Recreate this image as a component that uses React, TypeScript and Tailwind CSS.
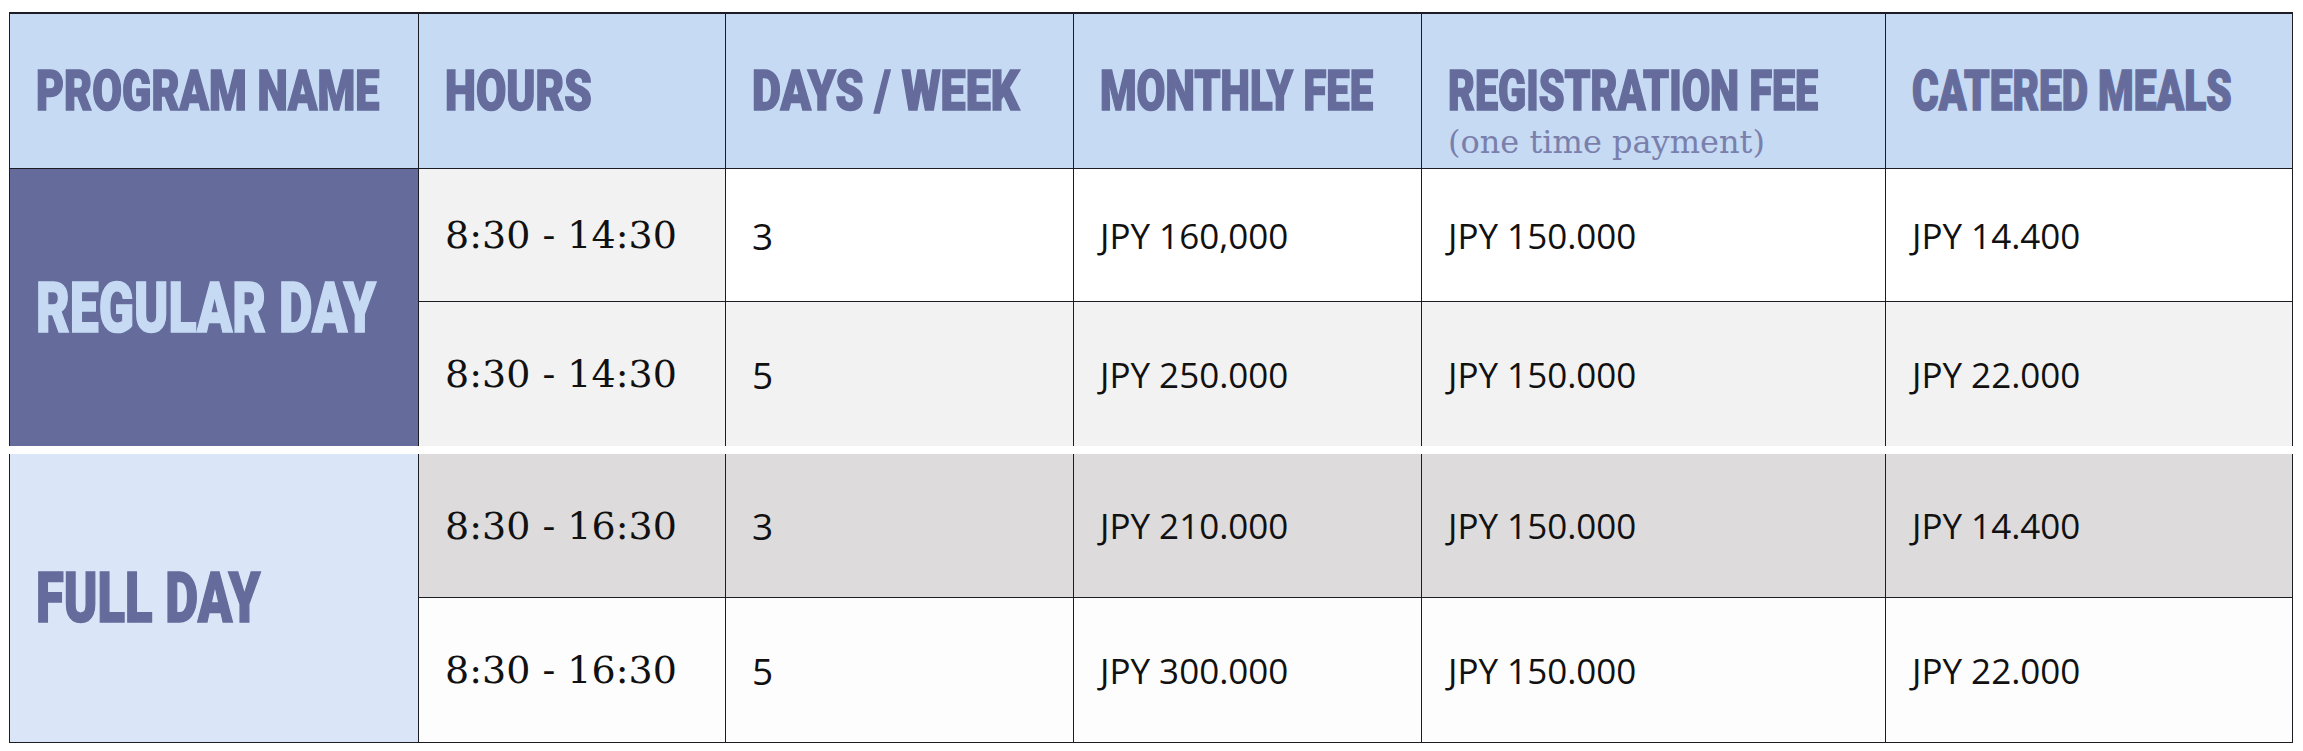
import React from "react"

const COLS = "grid grid-cols-[409px_307px_348px_348px_464px_407px]"

const headers = [
  { title: "PROGRAM NAME", fit: "scale-x-[0.77]" },
  { title: "HOURS", fit: "scale-x-[0.785]" },
  { title: "DAYS / WEEK", fit: "scale-x-[0.8]" },
  { title: "MONTHLY FEE", fit: "scale-x-[0.746]" },
  { title: "REGISTRATION FEE", fit: "scale-x-[0.737]", sub: "(one time payment)" },
  { title: "CATERED MEALS", fit: "scale-x-[0.726]" },
]

type Row = { hours: string; days: string; monthly: string; reg: string; meals: string }

const regular: Row[] = [
  { hours: "8:30 - 14:30", days: "3", monthly: "JPY 160,000", reg: "JPY 150.000", meals: "JPY 14.400" },
  { hours: "8:30 - 14:30", days: "5", monthly: "JPY 250.000", reg: "JPY 150.000", meals: "JPY 22.000" },
]

const fullDay: Row[] = [
  { hours: "8:30 - 16:30", days: "3", monthly: "JPY 210.000", reg: "JPY 150.000", meals: "JPY 14.400" },
  { hours: "8:30 - 16:30", days: "5", monthly: "JPY 300.000", reg: "JPY 150.000", meals: "JPY 22.000" },
]

function Display({ children, className = "" }: { children: React.ReactNode; className?: string }) {
  return (
    <span
      className={`inline-block origin-left whitespace-nowrap font-black leading-none [-webkit-text-stroke:1.6px_currentColor] ${className}`}
      style={{ fontFamily: "Roboto, 'Liberation Sans', sans-serif" }}
    >
      {children}
    </span>
  )
}

function Cell({ children, bg, kind, last }: { children: React.ReactNode; bg: string; kind: "serif" | "sans" | "num"; last?: boolean }) {
  return (
    <div className={`flex items-center pl-[26px] border-r border-[#1c1c24] ${last ? "" : "border-b"} ${bg}`}>
      {kind === "serif" ? (
        <span className="text-[38px] leading-none text-[#111]" style={{ fontFamily: "'DejaVu Serif', serif" }}>
          {children}
        </span>
      ) : (
        <span
          className={`${kind === "num" ? "text-[37px]" : "text-[35px]"} leading-none text-[#111]`}
          style={{ fontFamily: "'Open Sans', sans-serif" }}
        >
          {children}
        </span>
      )}
    </div>
  )
}

function Group({
  label,
  fit,
  rows,
  labelCls,
  rowBgs,
  bottomBorder,
}: {
  label: string
  fit: string
  rows: Row[]
  labelCls: string
  rowBgs: string[][]
  bottomBorder: boolean
}) {
  const heights = bottomBorder ? "grid-rows-[144px_145px]" : "grid-rows-[133px_144px]"
  return (
    <div className={`${COLS} ${heights} border-l border-[#1c1c24]`}>
      <div className={`row-span-2 flex items-center pl-[26px] border-r border-[#1c1c24] ${bottomBorder ? "border-b" : ""} ${labelCls}`}>
        <Display className={`text-[70px] ${fit}`}>{label}</Display>
      </div>
      {rows.map((r, i) => {
        const last = i === rows.length - 1 && !bottomBorder
        const b = rowBgs[i]
        return (
          <React.Fragment key={i}>
            <Cell bg={b[0]} kind="serif" last={last}>{r.hours}</Cell>
            <Cell bg={b[1]} kind="num" last={last}>{r.days}</Cell>
            <Cell bg={b[2]} kind="sans" last={last}>{r.monthly}</Cell>
            <Cell bg={b[2]} kind="sans" last={last}>{r.reg}</Cell>
            <Cell bg={b[2]} kind="sans" last={last}>{r.meals}</Cell>
          </React.Fragment>
        )
      })}
    </div>
  )
}

export default function App() {
  return (
    <div className="min-h-[751px] w-full bg-white pt-[12px]">
      <div className="ml-[9px] w-[2284px]">
        {/* header */}
        <div className={`${COLS} h-[157px] border-t-2 border-l border-[#1c1c24] bg-[#c6daf4]`}>
          {headers.map((h) => (
            <div key={h.title} className="flex flex-col items-start pt-[49px] pl-[26px] border-r border-b border-[#1c1c24]">
              <Display className={`text-[56px] text-[#656c9c] ${h.fit}`}>{h.title}</Display>
              {h.sub && (
                <span className="mt-[7px] text-[32px] leading-none text-[#7a80ab]" style={{ fontFamily: "'DejaVu Serif', serif" }}>
                  {h.sub}
                </span>
              )}
            </div>
          ))}
        </div>

        <Group
          label="REGULAR DAY"
          fit="scale-x-[0.74]"
          rows={regular}
          labelCls="bg-[#656b9b] text-[#c6daf4]"
          rowBgs={[
            ["bg-[#f2f2f2]", "bg-white", "bg-white"],
            ["bg-[#f2f2f2]", "bg-[#f2f2f2]", "bg-[#f2f2f2]"],
          ]}
          bottomBorder={false}
        />

        <div className="h-[8px] bg-white" />

        <Group
          label="FULL DAY"
          fit="scale-x-[0.726]"
          rows={fullDay}
          labelCls="bg-[#dae6f7] text-[#656c9c]"
          rowBgs={[
            ["bg-[#dddbdc]", "bg-[#dddbdc]", "bg-[#dddbdc]"],
            ["bg-[#fdfdfd]", "bg-[#fdfdfd]", "bg-[#fdfdfd]"],
          ]}
          bottomBorder={true}
        />
      </div>
    </div>
  )
}
